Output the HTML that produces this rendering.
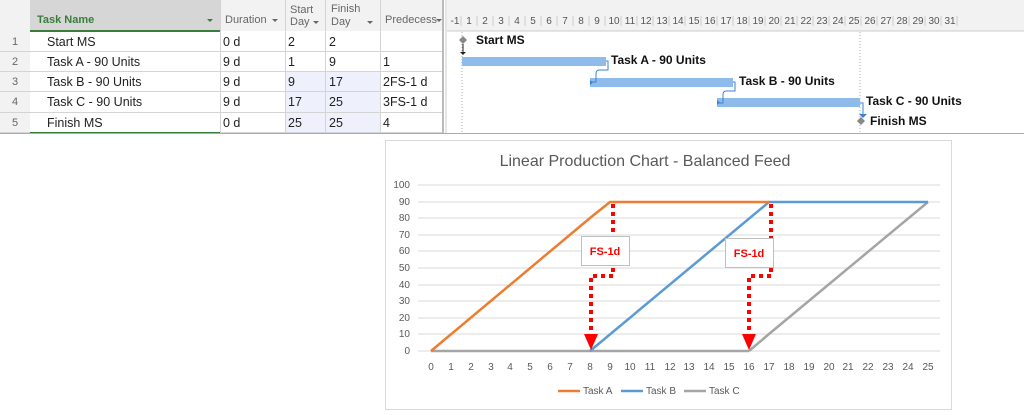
<!DOCTYPE html>
<html><head><style>
body{margin:0;background:#fff;width:1024px;height:415px;overflow:hidden}
svg{display:block;font-family:"Liberation Sans",sans-serif}
</style></head><body>
<svg width="1024" height="415" viewBox="0 0 1024 415">
<rect x="0" y="0" width="443" height="31" fill="#f2f2f2"/>
<rect x="30" y="0" width="190" height="31" fill="#d6d6d6"/>
<rect x="0" y="31" width="30" height="102" fill="#f2f2f2"/>
<rect x="285" y="71" width="95" height="62" fill="#eef1fb"/>
<g stroke="#d4d4d4" stroke-width="1">
<line x1="0" y1="51.5" x2="443" y2="51.5"/><line x1="0" y1="71.5" x2="443" y2="71.5"/>
<line x1="0" y1="91.5" x2="443" y2="91.5"/><line x1="0" y1="112.5" x2="443" y2="112.5"/>
<line x1="0" y1="132.5" x2="443" y2="132.5"/>
<line x1="220.5" y1="0" x2="220.5" y2="133"/><line x1="285.5" y1="0" x2="285.5" y2="133"/>
<line x1="325.5" y1="0" x2="325.5" y2="133"/><line x1="380.5" y1="0" x2="380.5" y2="133"/>
<line x1="442.5" y1="0" x2="442.5" y2="133"/>
</g>
<line x1="443" y1="0" x2="443" y2="133" stroke="#bbb" stroke-width="2"/>
<line x1="446" y1="0" x2="446" y2="133" stroke="#ccc"/>
<line x1="30" y1="31" x2="220" y2="31" stroke="#3a7d3a" stroke-width="2"/>
<line x1="30" y1="133" x2="220" y2="133" stroke="#3a7d3a" stroke-width="2"/>
<line x1="0" y1="133.5" x2="1024" y2="133.5" stroke="#aaa"/>
<text x="37" y="23" font-size="11" font-weight="bold" fill="#3a7d3a">Task Name</text>
<path d="M207 19h6l-3 3z" fill="#3a7d3a"/>
<g font-size="11" fill="#666">
<text x="225" y="23">Duration</text><path d="M272 19h6l-3 3z"/>
<text x="290" y="13">Start</text><text x="290" y="25">Day</text><path d="M313 21h6l-3 3z"/>
<text x="331" y="12">Finish</text><text x="331" y="25">Day</text><path d="M367 21h6l-3 3z"/>
<text x="385" y="23">Predecess</text><path d="M436 19h6l-3 3z"/>
<text x="12" y="45">1</text><text x="12" y="65">2</text><text x="12" y="85">3</text><text x="12" y="105">4</text><text x="12" y="126">5</text>
</g>
<g font-size="12.5" fill="#222">
<text x="47" y="46">Start MS</text><text x="47" y="66">Task A - 90 Units</text><text x="47" y="86">Task B - 90 Units</text><text x="47" y="106">Task C - 90 Units</text><text x="47" y="127">Finish MS</text>
<text x="223" y="46">0 d</text><text x="223" y="66">9 d</text><text x="223" y="86">9 d</text><text x="223" y="106">9 d</text><text x="223" y="127">0 d</text>
<text x="288" y="46">2</text><text x="288" y="66">1</text><text x="288" y="86">9</text><text x="288" y="106">17</text><text x="288" y="127">25</text>
<text x="329" y="46">2</text><text x="329" y="66">9</text><text x="329" y="86">17</text><text x="329" y="106">25</text><text x="329" y="127">25</text>
<text x="383" y="66">1</text><text x="383" y="86">2FS-1 d</text><text x="383" y="106">3FS-1 d</text><text x="383" y="127">4</text>
</g>
<rect x="447" y="0" width="577" height="31" fill="#f2f2f2"/>
<line x1="447" y1="31" x2="1024" y2="31" stroke="#ccc"/>
<g font-size="10" fill="#555" text-anchor="middle">
<text x="455" y="24">-1</text>
<text x="469" y="24">1</text><text x="485" y="24">2</text><text x="501" y="24">3</text><text x="517" y="24">4</text><text x="533" y="24">5</text><text x="549" y="24">6</text><text x="565" y="24">7</text><text x="581" y="24">8</text><text x="597" y="24">9</text><text x="614" y="24">10</text><text x="630" y="24">11</text><text x="646" y="24">12</text><text x="662" y="24">13</text><text x="678" y="24">14</text><text x="694" y="24">15</text><text x="710" y="24">16</text><text x="726" y="24">17</text><text x="742" y="24">18</text><text x="758" y="24">19</text><text x="774" y="24">20</text><text x="790" y="24">21</text><text x="806" y="24">22</text><text x="822" y="24">23</text><text x="838" y="24">24</text><text x="854" y="24">25</text><text x="870" y="24">26</text><text x="886" y="24">27</text><text x="902" y="24">28</text><text x="918" y="24">29</text><text x="934" y="24">30</text><text x="950" y="24">31</text>
</g>
<g stroke="#ccc"><path d="M461 16v10M477 16v10M493 16v10M509 16v10M525 16v10M541 16v10M557 16v10M573 16v10M589 16v10M605 16v10M621 16v10M637 16v10M653 16v10M669 16v10M685 16v10M701 16v10M717 16v10M733 16v10M749 16v10M765 16v10M781 16v10M797 16v10M813 16v10M829 16v10M845 16v10M861 16v10M877 16v10M893 16v10M909 16v10M925 16v10M941 16v10M957 16v10"/></g>
<g stroke="#aaa" stroke-dasharray="1,2"><line x1="462" y1="32" x2="462" y2="133"/><line x1="860" y1="32" x2="860" y2="133"/></g>
<rect x="462" y="57" width="144" height="9" fill="#8ebbea"/>
<rect x="590" y="78" width="143" height="9" fill="#8ebbea"/>
<rect x="717" y="98" width="143" height="9" fill="#8ebbea"/>
<path d="M459 40l4-4 4 4-4 4z" fill="#888"/>
<path d="M463 44v9" stroke="#222"/><path d="M460 52h6l-3 3z" fill="#222"/>
<path d="M606 61h2v9h-9q-3 0-3 4v8h-4" fill="none" stroke="#3a84d6"/><path d="M590 80v5l3-2.5z" fill="#3a84d6"/>
<path d="M733 82h2v9h-9q-3 0-3 4v8h-4" fill="none" stroke="#3a84d6"/><path d="M717 100v5l3-2.5z" fill="#3a84d6"/>
<path d="M860 103h3v11" fill="none" stroke="#3a84d6"/><path d="M859 114h8l-4 4z" fill="#3a84d6"/>
<path d="M857 121l4-4 4 4-4 4z" fill="#888"/>
<g font-size="12" font-weight="bold" fill="#111">
<text x="476" y="44">Start MS</text><text x="611" y="64">Task A - 90 Units</text><text x="739" y="85">Task B - 90 Units</text><text x="866" y="105">Task C - 90 Units</text><text x="870" y="125">Finish MS</text>
</g>
<rect x="385.5" y="140.5" width="566" height="269" fill="#fff" stroke="#d9d9d9"/>
<text x="645" y="166" font-size="16" fill="#595959" text-anchor="middle">Linear Production Chart - Balanced Feed</text>
<g stroke="#d9d9d9">
<line x1="418" y1="185" x2="940" y2="185"/><line x1="418" y1="202" x2="940" y2="202"/><line x1="418" y1="218" x2="940" y2="218"/><line x1="418" y1="235" x2="940" y2="235"/><line x1="418" y1="251" x2="940" y2="251"/><line x1="418" y1="268" x2="940" y2="268"/><line x1="418" y1="285" x2="940" y2="285"/><line x1="418" y1="301" x2="940" y2="301"/><line x1="418" y1="318" x2="940" y2="318"/><line x1="418" y1="334" x2="940" y2="334"/><line x1="418" y1="351" x2="940" y2="351"/>
</g>
<g font-size="10" fill="#595959" text-anchor="end">
<text x="410" y="188">100</text><text x="410" y="205">90</text><text x="410" y="221">80</text><text x="410" y="238">70</text><text x="410" y="254">60</text><text x="410" y="271">50</text><text x="410" y="288">40</text><text x="410" y="304">30</text><text x="410" y="321">20</text><text x="410" y="337">10</text><text x="410" y="354">0</text>
</g>
<g font-size="10" fill="#595959" text-anchor="middle">
<text x="431" y="370">0</text><text x="451" y="370">1</text><text x="471" y="370">2</text><text x="491" y="370">3</text><text x="510" y="370">4</text><text x="530" y="370">5</text><text x="550" y="370">6</text><text x="570" y="370">7</text><text x="590" y="370">8</text><text x="610" y="370">9</text><text x="630" y="370">10</text><text x="650" y="370">11</text><text x="670" y="370">12</text><text x="689" y="370">13</text><text x="709" y="370">14</text><text x="729" y="370">15</text><text x="749" y="370">16</text><text x="769" y="370">17</text><text x="789" y="370">18</text><text x="809" y="370">19</text><text x="829" y="370">20</text><text x="848" y="370">21</text><text x="868" y="370">22</text><text x="888" y="370">23</text><text x="908" y="370">24</text><text x="928" y="370">25</text>
</g>
<polyline points="431,351 749,351" fill="none" stroke="#a5a5a5" stroke-width="2.5"/>
<polyline points="749,351 769,334 928,202" fill="none" stroke="#a5a5a5" stroke-width="2.5"/>
<polyline points="590,351 769,202 928,202" fill="none" stroke="#5b9bd5" stroke-width="2.5"/>
<polyline points="431,351 590,218 610,202 769,202" fill="none" stroke="#ed7d31" stroke-width="2.5"/>
<g fill="none" stroke="#ff0000" stroke-width="4" stroke-dasharray="4,4">
<path d="M613 204v72h-22v58"/><path d="M771 204v72h-22v58"/>
</g>
<path d="M584 334h14l-7 16z" fill="#ff0000"/><path d="M742 334h14l-7 16z" fill="#ff0000"/>
<rect x="581.5" y="236.5" width="48" height="29" fill="#fff" stroke="#bfbfbf"/>
<text x="605" y="255" font-size="11" font-weight="bold" fill="#ff0000" text-anchor="middle">FS-1d</text>
<rect x="725.5" y="238.5" width="48" height="29" fill="#fff" stroke="#bfbfbf"/>
<text x="749" y="257" font-size="11" font-weight="bold" fill="#ff0000" text-anchor="middle">FS-1d</text>
<g font-size="10" fill="#595959">
<line x1="558" y1="391" x2="580" y2="391" stroke="#ed7d31" stroke-width="2.5"/><text x="583" y="394">Task A</text>
<line x1="621" y1="391" x2="643" y2="391" stroke="#5b9bd5" stroke-width="2.5"/><text x="646" y="394">Task B</text>
<line x1="684" y1="391" x2="706" y2="391" stroke="#a5a5a5" stroke-width="2.5"/><text x="709" y="394">Task C</text>
</g>
</svg>
</body></html>
